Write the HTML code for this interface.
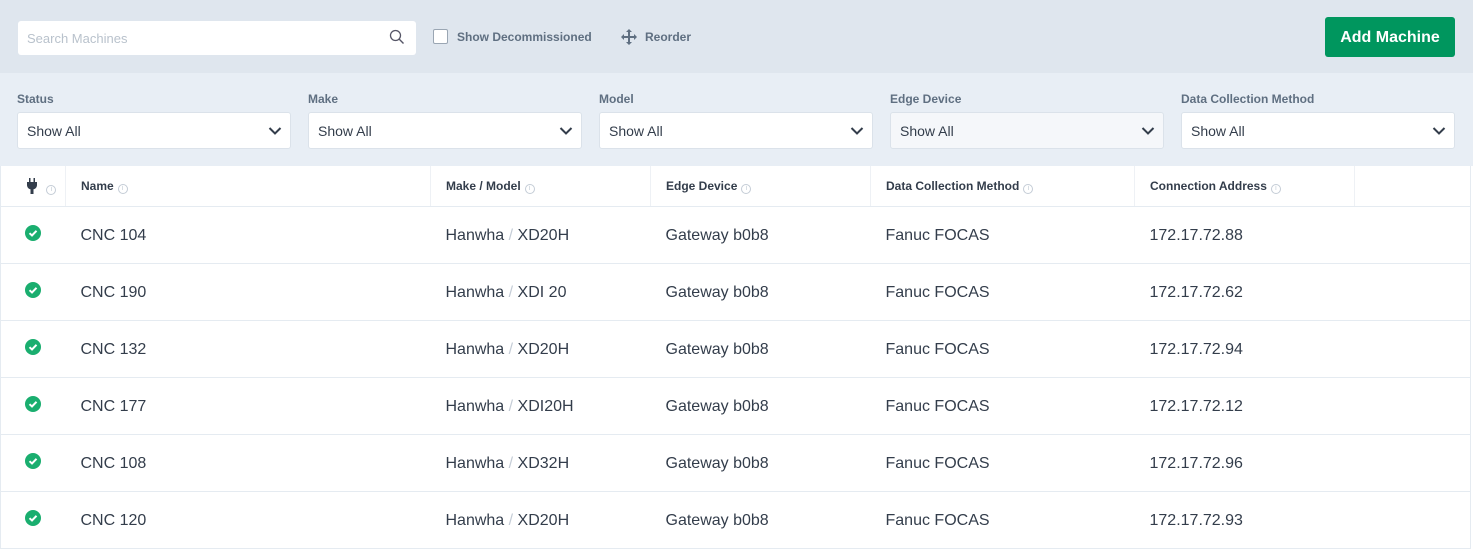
<!DOCTYPE html>
<html><head><style>
*{box-sizing:border-box;margin:0;padding:0}
body{width:1473px;height:551px;overflow:hidden;background:#fff;font-family:"Liberation Sans",sans-serif;color:#333d4b;position:relative}
.top{position:absolute;left:0;top:0;width:1473px;height:73px;background:#dfe6ee}
.search{position:absolute;left:18px;top:21px;width:398px;height:34px;background:#fff;border-radius:3px}
.search span{position:absolute;left:9px;top:10px;font-size:13px;color:#b9c2cc}
.search svg{position:absolute;right:11px;top:8px}
.cb{position:absolute;left:433px;top:29px;width:15px;height:15px;border:1px solid #9aa6b3;background:#fff;border-radius:2px}
.lbl{position:absolute;top:30px;font-size:12px;font-weight:bold;color:#5f6f81}
.btn{position:absolute;left:1325px;top:17px;width:130px;height:40px;background:#00965e;border-radius:3px;color:#fff;font-weight:bold;font-size:16px;text-align:center;line-height:41px}
.filters{position:absolute;left:0;top:73px;width:1473px;height:93px;background:#e8eef5}
.f{position:absolute;top:0}
.f b{position:absolute;top:19px;font-size:12px;color:#5f6f81;white-space:nowrap}
.sel{position:absolute;top:39px;width:274px;height:37px;background:#fff;border:1px solid #dbe2ea;border-radius:3px;font-size:14px;line-height:37px;padding-left:9px;color:#333d4b}
.sel svg{position:absolute;right:8px;top:13px}
table{position:absolute;left:0;top:166px;width:1471px;border-collapse:collapse;border-left:1px solid #e5ebf1;border-right:1px solid #e5ebf1}
th{height:40px;padding-top:1px;text-align:left;font-size:12px;font-weight:bold;color:#333d4b;border-right:1px solid #eef1f5;border-bottom:1px solid #e5ebf1;padding-left:15px;white-space:nowrap}
td{height:57px;border-bottom:1px solid #e5ebf1;font-size:16px;padding-left:15px;padding-top:3px;white-space:nowrap}
.i{display:inline-block;width:10px;height:10px;border:1px solid #c4ccd6;border-radius:50%;font-size:7px;color:#c4ccd6;text-align:center;line-height:8px;vertical-align:0;margin-left:4px;font-weight:normal}
.sl{color:#c4ccd6}
</style></head><body>
<div class="top">
<div class="search"><span>Search Machines</span><svg width="16" height="16" viewBox="0 0 16 16"><circle cx="6.5" cy="6.5" r="5" fill="none" stroke="#556" stroke-width="1.3"/><path d="M10.3 10.3L14.5 14.5" stroke="#556" stroke-width="1.4"/></svg></div>
<div class="cb"></div><div class="lbl" style="left:457px">Show Decommissioned</div>
<svg style="position:absolute;left:621px;top:29px" width="16" height="16" viewBox="0 0 16 16" fill="#5f6f81"><path d="M8 0L11 3H9V7H13V5L16 8L13 11V9H9V13H11L8 16L5 13H7V9H3V11L0 8L3 5V7H7V3H5Z"/></svg>
<div class="lbl" style="left:645px">Reorder</div>
<div class="btn">Add Machine</div>
</div>
<div class="filters">
<div class="f"><b style="left:17px">Status</b><div class="sel" style="left:17px">Show All<svg width="14" height="10" viewBox="0 0 14 10"><path d="M1.5 2L7 7.5 12.5 2" fill="none" stroke="#333d4b" stroke-width="2"/></svg></div></div>
<div class="f"><b style="left:308px">Make</b><div class="sel" style="left:308px">Show All<svg width="14" height="10" viewBox="0 0 14 10"><path d="M1.5 2L7 7.5 12.5 2" fill="none" stroke="#333d4b" stroke-width="2"/></svg></div></div>
<div class="f"><b style="left:599px">Model</b><div class="sel" style="left:599px">Show All<svg width="14" height="10" viewBox="0 0 14 10"><path d="M1.5 2L7 7.5 12.5 2" fill="none" stroke="#333d4b" stroke-width="2"/></svg></div></div>
<div class="f"><b style="left:890px">Edge Device</b><div class="sel" style="left:890px;background:#f5f7fa">Show All<svg width="14" height="10" viewBox="0 0 14 10"><path d="M1.5 2L7 7.5 12.5 2" fill="none" stroke="#333d4b" stroke-width="2"/></svg></div></div>
<div class="f"><b style="left:1181px">Data Collection Method</b><div class="sel" style="left:1181px">Show All<svg width="14" height="10" viewBox="0 0 14 10"><path d="M1.5 2L7 7.5 12.5 2" fill="none" stroke="#333d4b" stroke-width="2"/></svg></div></div>
</div>
<table>
<tr><th style="width:65px;padding-left:25px"><svg width="12" height="16" viewBox="0 0 12 16" style="vertical-align:-3px"><path d="M3 0h1.5v4H3zM7.5 0H9v4H7.5zM1 4h10v3c0 2.5-1.8 4-3.5 4.3V16h-3v-4.7C2.8 11 1 9.5 1 7z" fill="#333d4b"/></svg> <span class="i" style="margin-left:5px">i</span></th>
<th style="width:365px">Name<span class="i">i</span></th><th style="width:220px">Make / Model<span class="i">i</span></th><th style="width:220px">Edge Device<span class="i">i</span></th><th style="width:264px">Data Collection Method<span class="i">i</span></th><th style="width:220px">Connection Address<span class="i">i</span></th><th style="border-right:none"></th></tr>
<tr><td style="padding-left:24px;vertical-align:top;padding-top:18px"><svg width="16" height="16" viewBox="0 0 16 16"><circle cx="8" cy="8" r="8" fill="#1aae6f"/><path d="M4.5 8.2L7 10.5 11.5 5.8" fill="none" stroke="#fff" stroke-width="2"/></svg></td><td>CNC 104</td><td>Hanwha <span class="sl">/</span> XD20H</td><td>Gateway b0b8</td><td>Fanuc FOCAS</td><td>172.17.72.88</td><td></td></tr>
<tr><td style="padding-left:24px;vertical-align:top;padding-top:18px"><svg width="16" height="16" viewBox="0 0 16 16"><circle cx="8" cy="8" r="8" fill="#1aae6f"/><path d="M4.5 8.2L7 10.5 11.5 5.8" fill="none" stroke="#fff" stroke-width="2"/></svg></td><td>CNC 190</td><td>Hanwha <span class="sl">/</span> XDI 20</td><td>Gateway b0b8</td><td>Fanuc FOCAS</td><td>172.17.72.62</td><td></td></tr>
<tr><td style="padding-left:24px;vertical-align:top;padding-top:18px"><svg width="16" height="16" viewBox="0 0 16 16"><circle cx="8" cy="8" r="8" fill="#1aae6f"/><path d="M4.5 8.2L7 10.5 11.5 5.8" fill="none" stroke="#fff" stroke-width="2"/></svg></td><td>CNC 132</td><td>Hanwha <span class="sl">/</span> XD20H</td><td>Gateway b0b8</td><td>Fanuc FOCAS</td><td>172.17.72.94</td><td></td></tr>
<tr><td style="padding-left:24px;vertical-align:top;padding-top:18px"><svg width="16" height="16" viewBox="0 0 16 16"><circle cx="8" cy="8" r="8" fill="#1aae6f"/><path d="M4.5 8.2L7 10.5 11.5 5.8" fill="none" stroke="#fff" stroke-width="2"/></svg></td><td>CNC 177</td><td>Hanwha <span class="sl">/</span> XDI20H</td><td>Gateway b0b8</td><td>Fanuc FOCAS</td><td>172.17.72.12</td><td></td></tr>
<tr><td style="padding-left:24px;vertical-align:top;padding-top:18px"><svg width="16" height="16" viewBox="0 0 16 16"><circle cx="8" cy="8" r="8" fill="#1aae6f"/><path d="M4.5 8.2L7 10.5 11.5 5.8" fill="none" stroke="#fff" stroke-width="2"/></svg></td><td>CNC 108</td><td>Hanwha <span class="sl">/</span> XD32H</td><td>Gateway b0b8</td><td>Fanuc FOCAS</td><td>172.17.72.96</td><td></td></tr>
<tr><td style="padding-left:24px;vertical-align:top;padding-top:18px"><svg width="16" height="16" viewBox="0 0 16 16"><circle cx="8" cy="8" r="8" fill="#1aae6f"/><path d="M4.5 8.2L7 10.5 11.5 5.8" fill="none" stroke="#fff" stroke-width="2"/></svg></td><td>CNC 120</td><td>Hanwha <span class="sl">/</span> XD20H</td><td>Gateway b0b8</td><td>Fanuc FOCAS</td><td>172.17.72.93</td><td></td></tr>
</table>
</body></html>
